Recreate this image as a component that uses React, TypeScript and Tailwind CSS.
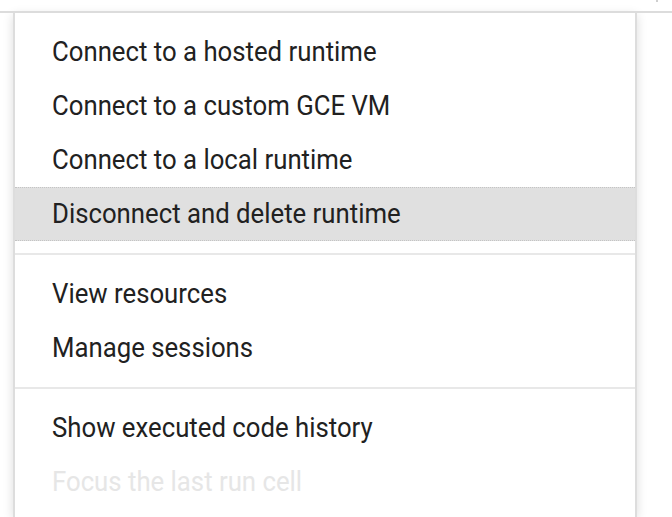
import React from 'react';

type Item = { label: string; active?: boolean; disabled?: boolean };

const groups: Item[][] = [
  [
    { label: 'Connect to a hosted runtime' },
    { label: 'Connect to a custom GCE VM' },
    { label: 'Connect to a local runtime' },
    { label: 'Disconnect and delete runtime', active: true },
  ],
  [{ label: 'View resources' }, { label: 'Manage sessions' }],
  [{ label: 'Show executed code history' }, { label: 'Focus the last run cell', disabled: true }],
];

function MenuItem({ item }: { item: Item }) {
  return (
    <div
      className={
        item.active
          ? 'h-[54px] flex items-center pl-[37px] bg-[#e0e0e0] border-y border-dotted border-[#c4c4c4] text-[#212121]'
          : item.disabled
          ? 'h-[54px] flex items-center pl-[37px] text-[#e6e6e6]'
          : 'h-[54px] flex items-center pl-[37px] text-[#212121]'
      }
    >
      <span className="inline-block origin-left scale-x-[0.99] scale-y-[1.04]">{item.label}</span>
    </div>
  );
}

export default function App() {
  return (
    <div
      className="w-[672px] h-[517px] overflow-hidden bg-white flex flex-col"
      style={{ fontFamily: 'Roboto, "Liberation Sans", sans-serif' }}
    >
      <div className="h-[13px] shrink-0 border-b-2 border-[#dcdcdc] relative">
        <div className="absolute right-[14px] top-0 w-[2px] h-[2px] bg-[#cfcfcf]" />
      </div>
      <div className="flex-1 flex pl-[13px] pr-[35px]">
        <div className="flex-1 bg-white border-x-2 border-[#dddddd] shadow-[0_2px_10px_rgba(0,0,0,0.14)] pt-[12px] text-[26px] leading-none">
          {groups.map((g, gi) => (
            <div key={gi}>
              {gi > 0 && <div className="my-[12px] h-[2px] bg-[#e8e8e8]" />}
              {g.map((it) => (
                <MenuItem key={it.label} item={it} />
              ))}
            </div>
          ))}
        </div>
      </div>
    </div>
  );
}
